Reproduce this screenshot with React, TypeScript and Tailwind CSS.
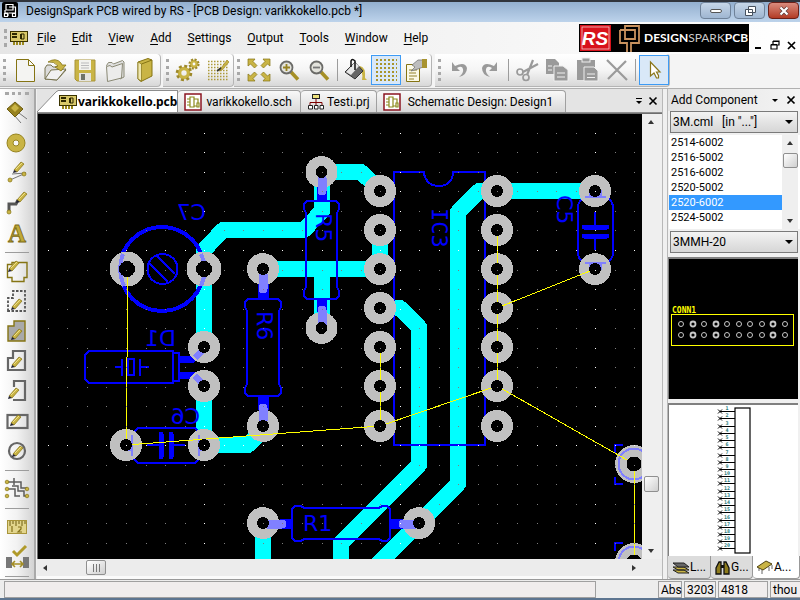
import type { ReactNode } from "react"

const GOLD = "#c9b445"
const DARK = "#857413"
const GREY = "#9a9a9a"

function Icon({ children, size = 26 }: { children: ReactNode; size?: number }) {
    return (
        <svg width={size} height={size} viewBox={`0 0 ${size} ${size}`} fill="none" aria-hidden="true" className="shrink-0">
            {children}
        </svg>
    )
}

function Pencil({ x, y }: { x: number; y: number }) {
    return (
        <g transform={`translate(${x} ${y})`}>
            <path d="M1 9L8 1L11 3L4 11Z" fill={GOLD} stroke="#8d7a1b" strokeWidth="0.8" />
            <path d="M3 8L9 2" stroke="#eee08a" />
            <path d="M0 12L1 9L4 11Z" fill="#223" />
        </g>
    )
}

const icons: Record<string, ReactNode> = {
    new: <path d="M4.500 2.500H16.500L22.500 8.500V24.500H4.500ZM16.500 2.500V8.500H22.500" fill="#f4f4f2" stroke={DARK} />,
    open: (
        <>
            <path d="M3 11L5 8H9L11 10H17L18 13H24L15 23L3 22Z" fill="#dcdcdc" stroke="#77734f" />
            <path d="M3 22L9 13L24 12L15 23Z" fill="#f1f1f1" stroke="#77734f" />
            <path d="M6 5Q14 0 19 6L20 8H24L19 14L13 10L16 9Q12 4 6 5Z" fill={GOLD} stroke={DARK} strokeWidth="0.8" />
        </>
    ),
    save: (
        <>
            <path d="M3 3H23V24H5L3 22Z" fill={GOLD} stroke="#a8943a" />
            <rect x="7" y="3" width="12" height="10" fill="#f3f3ee" />
            <path d="M9 6H17M9 8.500H17M9 11H17" stroke="#bbb" />
            <rect x="7" y="16" width="12" height="8" fill="#e4e4df" />
            <rect x="9" y="17" width="4" height="6" fill="#6f7468" />
        </>
    ),
    folder: (
        <>
            <path d="M4.500 8.500L6.500 5.500H10L11.500 7L20.500 3.500L22 5V20L18 22Z" fill="#e0e0df" stroke="#8a8975" />
            <path d="M4.500 9.500L8 8.500L10 10L20.500 6.500L19.500 21L5.500 24.500Z" fill="#ececeb" stroke="#8a8975" />
        </>
    ),
    book: (
        <>
            <path d="M6 5L16 1.500L20 3V19L9 24.500L6 22Z" fill={GOLD} stroke={DARK} />
            <path d="M6 5L9.500 7V24L6 22Z" fill="#efe7b0" stroke={DARK} strokeWidth="0.7" />
            <path d="M9.500 7L20 3" stroke={DARK} />
        </>
    ),
    gears: (
        <>
            <circle cx="9" cy="16" r="4.500" stroke={GOLD} strokeWidth="3.600" />
            <circle cx="9" cy="16" r="7" stroke="#9d8829" strokeWidth="2.600" strokeDasharray="3 2.500" />
            <circle cx="19" cy="7" r="2.800" stroke={GOLD} strokeWidth="2.800" />
            <circle cx="19" cy="7" r="4.600" stroke="#9d8829" strokeWidth="2" strokeDasharray="2.100 1.510" />
        </>
    ),
    gridEdit: (
        <>
            {[4, 7, 10, 13, 16, 19, 22].map((y) => (
                <path key={y} d={`M3 ${y + 0.5}H23`} stroke="#ad9a3a" strokeWidth="1.500" strokeDasharray="1.500 1.500" />
            ))}
            <path d="M14 14L22 3L24 5L17 13Z" fill={GOLD} stroke="#9d8829" strokeWidth="0.700" />
            <path d="M12 14L16 11" stroke="#333" strokeWidth="1.600" />
        </>
    ),
    fit: (
        <g fill={GOLD} stroke={DARK} strokeWidth="0.700">
            <path d="M2 2H9L7 4.500L11 8.500L8.500 11L4.500 7L2 9Z" />
            <path d="M24 2V9L21.500 7L17.500 11L15 8.500L19 4.500L17 2Z" />
            <path d="M2 24V17L4.500 19L8.500 15L11 17.500L7 21.500L9 24Z" />
            <path d="M24 24H17L19 21.500L15 17.500L17.500 15L21.500 19L24 17Z" />
        </g>
    ),
    zoomIn: (
        <>
            <path d="M15 15L22 22.500" stroke="#a58f26" strokeWidth="3.600" />
            <circle cx="10.500" cy="10.500" r="6" fill="#e3e3dc" stroke="#6b6b68" strokeWidth="1.800" />
            <path d="M7 10.500H14M10.500 7V14" stroke="#968221" strokeWidth="1.800" />
        </>
    ),
    zoomOut: (
        <>
            <path d="M15 15L22 22.500" stroke="#a58f26" strokeWidth="3.600" />
            <circle cx="10.500" cy="10.500" r="6" fill="#e3e3dc" stroke="#6b6b68" strokeWidth="1.800" />
            <path d="M7 10.500H14" stroke="#777" strokeWidth="1.800" />
        </>
    ),
    bucket: (
        <>
            <path d="M17 9Q23 10 22 21L24 23H19Q21 15 15 12Z" fill={GOLD} />
            <path d="M2 15L12 5L20 14L12 22Z" fill="#666" stroke="#333" />
            <path d="M3 15L12 5L16 9L8 18Z" fill="#e7e7e7" />
            <path d="M8 10V4Q9 1 12 4V13" stroke="#111" strokeWidth="1.500" />
        </>
    ),
    grid: (
        <>
            {[3, 7, 11, 15, 19, 23].map((y) => (
                <path key={y} d={`M3 ${y}H24`} stroke="#a9942c" strokeWidth="2" strokeDasharray="2 2" />
            ))}
        </>
    ),
    props: (
        <>
            <path d="M3.500 7.500H16.500V24.500H3.500Z" fill="#fbf9e6" stroke={DARK} />
            <path d="M6 13H14M6 16H13M6 19H14M6 22H11" stroke="#93812a" />
            <path d="M9 8L15 3H20V10L15 12L8 14L12 10Z" fill="#bdbdbd" stroke="#777" strokeWidth="0.800" />
            <rect x="19" y="2" width="5" height="9" fill="#a89330" />
        </>
    ),
    undo: <path d="M5 5V14H13L10 11Q15 8 16 12Q17 16 12 20Q20 18 20 11Q18 4 8 9Z" fill={GREY} />,
    redo: <path d="M20 5V14H12L15 11Q10 8 9 12Q8 16 13 20Q5 18 5 11Q7 4 17 9Z" fill={GREY} />,
    cut: (
        <g stroke={GREY} strokeWidth="1.700">
            <path d="M9 15L24 7M13 18L19 3" strokeWidth="2.200" />
            <circle cx="6" cy="15" r="3" />
            <circle cx="12" cy="20.500" r="3" />
        </g>
    ),
    copy: (
        <g fill={GREY}>
            <path d="M2 2H11L15 6V17H2Z" />
            <path d="M10 9H19L24 13V24H10Z" stroke="#eee" />
            <path d="M4 9H8M4 13H8M13 16H21M13 20H21" stroke="#f0f0f0" />
        </g>
    ),
    paste: (
        <g fill={GREY}>
            <path d="M3 3H21V23H3Z" />
            <rect x="8" y="1" width="8" height="4" stroke="#eee" />
            <path d="M10 10H20L24 14V24H10Z" stroke="#eee" />
            <path d="M13 17H21M13 20.500H21" stroke="#f0f0f0" />
        </g>
    ),
    remove: <path d="M3 3L23 23M22 4L4 22" stroke={GREY} strokeWidth="2.200" />,
    select: <path d="M9.500 5V19L13 16L15.500 21H17.500V18.500L15.500 15H19Z" fill="#fff" stroke="#8a761a" strokeWidth="1.200" />,

    // left toolbar
    component: (
        <>
            <path d="M10 15L17 23M15 13L23 19" stroke="#777" />
            <path d="M3 9L11 2L19 9L11 17Z" fill="#97821f" stroke="#6d5d10" />
            <path d="M7 8L11 4L15 8L11 12Z" fill={GOLD} />
        </>
    ),
    pad: (
        <>
            <circle cx="12" cy="13" r="6" stroke={GOLD} strokeWidth="6" />
            <circle cx="12" cy="13" r="9" stroke="#97841f" />
            <circle cx="12" cy="13" r="3" stroke="#97841f" fill="#f7f7f7" />
        </>
    ),
    wire: (
        <>
            <Pencil x={9} y={1} />
            <path d="M8 14L22 13L6 20" stroke="#777" />
            <circle cx="6" cy="20" r="2" fill={GOLD} stroke={DARK} strokeWidth="0.700" />
            <circle cx="20" cy="14" r="2" fill={GOLD} stroke={DARK} strokeWidth="0.700" />
        </>
    ),
    track: (
        <>
            <path d="M5 21V14H12L14 10" stroke="#555" strokeWidth="3" />
            <Pencil x={12} y={1} />
            <circle cx="5" cy="22" r="2" fill={GOLD} stroke={DARK} strokeWidth="0.700" />
        </>
    ),
    text: (
        <text x="13" y="22" textAnchor="middle" fill="#bfa938" stroke="#7b6914" strokeWidth="0.800" className="font-['Liberation_Serif',serif] text-[25px] font-bold">
            A
        </text>
    ),
    board: (
        <>
            <path d="M3.500 6.500H8V4.500H23V19.500H20V23.500H8V19.500H3.500Z" stroke={DARK} strokeWidth="1.400" />
            <Pencil x={4} y={2} />
        </>
    ),
    keepout: (
        <>
            <path d="M4 23V10H9V3H21V23Z" stroke="#555" strokeWidth="1.800" strokeDasharray="2.500 1.500" />
            <Pencil x={7} y={10} />
        </>
    ),
    copper: (
        <>
            <path d="M4 23V8H10V3H21V23Z" fill="#a9a9a9" stroke={DARK} strokeWidth="1.400" />
            <Pencil x={7} y={10} />
        </>
    ),
    shape: (
        <>
            <path d="M4 22V10H9V3H21V22Z" stroke="#666" strokeWidth="2.200" />
            <Pencil x={7} y={8} />
        </>
    ),
    openShape: (
        <>
            <path d="M10 9V3H21V22H9" stroke="#666" strokeWidth="2.200" />
            <Pencil x={4} y={9} />
        </>
    ),
    rect: (
        <>
            <rect x="3.500" y="7" width="20" height="13" stroke="#666" strokeWidth="2.200" />
            <Pencil x={6} y={6} />
        </>
    ),
    circle: (
        <>
            <circle cx="13" cy="13" r="8" stroke="#666" strokeWidth="2.200" />
            <Pencil x={8} y={7} />
        </>
    ),
    autoroute: (
        <>
            <path d="M4 6H17V12H23M4 13H11V20H16M8 10H14V15H20V20H23M10 2V9" stroke="#5c5c5c" strokeWidth="1.500" />
            {[[3, 6], [3, 13], [3, 20], [23, 13], [23, 20]].map(([cx, cy]) => (
                <circle key={`${cx}-${cy}`} cx={cx} cy={cy} r="1.800" fill={GOLD} stroke={DARK} strokeWidth="0.700" />
            ))}
        </>
    ),
    ruler: (
        <>
            <rect x="3.500" y="6.500" width="19" height="13" fill="#e2d58c" stroke="#a8943a" />
            <path d="M6 7V12M9 7V10M12 7V12M15 7V10M18 7V12M21 7V10" stroke="#6d5d10" />
            <path d="M8 12V18M14 13H17V15L14 18H18" stroke="#83711a" strokeWidth="1.200" />
        </>
    ),
    drc: (
        <>
            <path d="M2 13H8V24H2ZM19 13H25V24H19Z" fill="#777" />
            <path d="M8 20H18M11 17L8 20L11 23M16 17L19 20L16 23" stroke="#a58f26" strokeWidth="1.600" />
            <path d="M9 7L13 11L22 2" stroke="#b09a2a" strokeWidth="3" />
        </>
    ),
}

function PcbIcon() {
    return (
        <Icon size={20}>
            <rect x="1" y="3" width="18" height="11" fill="#3b3300" />
            <rect x="2" y="4" width="16" height="9" fill="#d8c868" />
            <path d="M3 6H8M3 9H8M12 6V11" stroke="#2c2700" strokeWidth="2" />
            <path d="M12 6H15V11H12" stroke="#2c2700" />
            <path d="M5 14V17M8 14V17M11 14V17M14 14V17" stroke="#9a881b" strokeWidth="2" />
        </Icon>
    )
}

function SchIcon() {
    return (
        <Icon size={18}>
            <rect x="1" y="1" width="16" height="16" fill="#fff" stroke="#8b1420" strokeWidth="1.500" />
            <path d="M6 4H10V14H6ZM3 6H6M3 9H6M3 12H6M10 6H14V10M10 13H13M13 10H15V14H13Z" stroke="#8c8a1d" strokeWidth="1.200" />
        </Icon>
    )
}

function PrjIcon() {
    return (
        <Icon size={18}>
            <path d="M9 6V9M3 13V9.500H15V13M9 9V13" stroke="#7d0000" />
            <rect x="5.500" y="1.500" width="7" height="4" fill="#eee27c" stroke="#222" />
            <path d="M1.500 12.500H5.500V16H1.500ZM7.500 12.500H11V16H7.500ZM13 12.500H16.500V16H13Z" fill="#fff" stroke="#222" />
        </Icon>
    )
}

function ToolButton({ name, on, off }: { name: string; on?: boolean; off?: boolean }) {
    return (
        <button
            aria-label={name}
            disabled={off}
            className={`flex size-[30px] shrink-0 items-center justify-center border ${on ? "border-[#3d9bf5] bg-[#d9e8f8]" : "border-transparent"}`}>
            <Icon>{icons[name]}</Icon>
        </button>
    )
}

function Band({ children }: { children: ReactNode }) {
    return (
        <div className="flex h-[33px] shrink-0 items-center rounded-r border-r border-b border-[#b4b4b4] bg-linear-to-b from-white via-[#f5f5f5] to-[#d8d8d8] pl-[3px]">
            <div className="mr-1 h-[22px] border-l-3 border-dotted border-[#a8a8a8]" />
            {children}
        </div>
    )
}

const ToolSep = () => <div className="mx-[3px] h-[22px] border-l border-[#9c9c9c]" />
const SideSep = () => <div className="flex h-2 w-6 shrink-0 items-center"><div className="w-full border-t border-[#9c9c9c]" /></div>

const menus = ["File", "Edit", "View", "Add", "Settings", "Output", "Tools", "Window", "Help"]

function TitleBar() {
    return (
        <header className="flex h-[22px] shrink-0 items-start border-t-2 border-[#30343c] bg-linear-to-b from-[#93afcf] to-[#bdd3eb]">
            <Icon size={20}>
                <rect x="2" y="0" width="16" height="16" rx="2" fill="#000" />
                <path d="M6 2.500H13V8H6ZM9 5H15.500V11H9M5 8V11H8V14M4.500 11.500H7.500V14.500H4.500ZM12.500 11.500H15.500V14.500H12.500Z" stroke="#fff" strokeWidth="1.200" />
            </Icon>
            <h1 className="ml-1.5 grow truncate text-[12px] leading-[18px]">DesignSpark PCB wired by RS - [PCB Design: varikkokello.pcb *]</h1>
            <div className="flex gap-[3px] pr-px">
                <button aria-label="Minimize" className="flex h-[17px] w-[31px] items-center justify-center rounded-sm border border-[#6f8299] bg-linear-to-b from-[#c6d6e8] to-[#9fb6d1]">
                    <span className="h-1 w-3 rounded-xs border border-[#555] bg-white" />
                </button>
                <button aria-label="Restore" className="flex h-[17px] w-[31px] items-center justify-center rounded-sm border border-[#6f8299] bg-linear-to-b from-[#c6d6e8] to-[#9fb6d1]">
                    <Icon size={14}>
                        <path d="M5.500 2.500H12.500V8.500H5.500ZM2.500 5.500H9.500V11.500H2.500Z" fill="#fff" stroke="#48525f" />
                        <path d="M5 8H7V9H5Z" fill="#48525f" />
                    </Icon>
                </button>
                <button aria-label="Close" className="flex h-[17px] w-[31px] items-center justify-center rounded-sm border border-[#6b2018] bg-linear-to-b from-[#d98b7d] to-[#b23a24]">
                    <Icon size={12}>
                        <path d="M2.500 2.500L9.500 9.500M9.500 2.500L2.500 9.500" stroke="#5b3c3c" strokeWidth="3.600" />
                        <path d="M2.500 2.500L9.500 9.500M9.500 2.500L2.500 9.500" stroke="#fff" strokeWidth="2.200" />
                    </Icon>
                </button>
            </div>
        </header>
    )
}

function MenuBar() {
    return (
        <div className="flex h-8 shrink-0 items-center bg-linear-to-r from-[#e6e6e6] to-white pl-1">
            <div className="mr-0.5 h-[18px] border-l-3 border-dotted border-[#a8a8a8]" />
            <PcbIcon />
            <nav className="flex grow">
                {menus.map((m) => (
                    <button key={m} className="px-2 text-[12px] leading-4">
                        <span className="underline underline-offset-2">{m[0]}</span>
                        {m.slice(1)}
                    </button>
                ))}
            </nav>
            <svg width="170" height="28" viewBox="0 0 170 28" fill="none" className="shrink-0">
                <rect width="170" height="28" fill="#000" />
                <rect x="1" y="1" width="31" height="26" fill="#d8121b" />
                <rect x="3" y="3" width="27" height="22" stroke="#f2c9c9" strokeWidth="0.800" />
                <text x="16" y="21" textAnchor="middle" fill="#fff" className="font-['Liberation_Sans',sans-serif] text-[19px] font-bold italic">RS</text>
                <path d="M41 6H56V15H46V2H60V19H52V28M41 6V19H48V28" stroke="#c9925e" strokeWidth="1.800" />
                <text x="65" y="18" className="font-[Lato,sans-serif] text-[12px]">
                    <tspan fill="#fff" className="font-bold">DESIGN</tspan>
                    <tspan fill="#ccc" className="font-normal">SPARK</tspan>
                    <tspan fill="#fff" className="font-bold">PCB</tspan>
                </text>
            </svg>
            <div className="flex items-center gap-1.5 self-end pr-1 pb-1 pl-[5px]">
                <button aria-label="Minimize document"><Icon size={10}><path d="M1 8H7" stroke="#000" strokeWidth="2" /></Icon></button>
                <button aria-label="Restore document"><Icon size={10}><path d="M3 1H9V5H7M1 5H7V9H1ZM3 1V4M1 4.500H7M3 1.500H9" stroke="#000" strokeWidth="1.200" /></Icon></button>
                <button aria-label="Close document"><Icon size={10}><path d="M2 2L9 9M9 2L2 9" stroke="#000" strokeWidth="1.700" /></Icon></button>
            </div>
        </div>
    )
}

function ToolBar() {
    return (
        <div className="flex h-[34px] shrink-0 bg-[#f4f4f4]">
            <Band>
                {["new", "open", "save", "folder", "book"].map((n) => <ToolButton key={n} name={n} />)}
            </Band>
            <div className="w-0.5" />
            <Band>
                {["gears", "gridEdit"].map((n) => <ToolButton key={n} name={n} />)}
            </Band>
            <Band>
                {["fit", "zoomIn", "zoomOut"].map((n) => <ToolButton key={n} name={n} />)}
                <ToolSep />
                <ToolButton name="bucket" />
                <ToolButton name="grid" on />
                <ToolButton name="props" />
            </Band>
            <div className="w-[3px]" />
            <Band>
                {["undo", "redo"].map((n) => <ToolButton key={n} name={n} off />)}
                <ToolSep />
                {["cut", "copy", "paste", "remove"].map((n) => <ToolButton key={n} name={n} off />)}
                <ToolSep />
                <ToolButton name="select" on />
            </Band>
        </div>
    )
}

function SideBar() {
    return (
        <aside className="flex w-[36px] shrink-0 flex-col items-center overflow-hidden border-r-2 border-[#a9a9a9] bg-linear-to-r from-white via-[#f2f2f2] to-[#d3d3d3]">
            <div className="mt-[3px] mb-[3px] w-6 border-t-3 border-dotted border-[#a8a8a8]" />
            {["component", "pad", "wire", "track", "text"].map((n) => <ToolButton key={n} name={n} />)}
            <SideSep />
            {["board", "keepout", "copper", "shape", "openShape", "rect", "circle"].map((n) => <ToolButton key={n} name={n} />)}
            <SideSep />
            <ToolButton name="autoroute" />
            <SideSep />
            <ToolButton name="ruler" />
            <ToolButton name="drc" />
            <SideSep />
        </aside>
    )
}

function Tabs() {
    return (
        <div className="flex h-6 shrink-0 items-end border-b border-[#8e8e8e] bg-[#e4e4e4]">
            <div role="tablist" className="flex h-[22px] grow">
                <div className="flex">
                    <svg width="22" height="22" viewBox="0 0 22 22" className="-mr-px shrink-0">
                        <path d="M0 22L18 3Q20 .5 22 .5V22Z" fill="#fff" />
                        <path d="M0 22L18 3Q20 .5 22 .5" fill="none" stroke="#8e8e8e" />
                    </svg>
                    <button role="tab" aria-selected="true" className="flex items-center border-t border-r border-[#8e8e8e] bg-white font-['Noto_Sans',sans-serif] text-[12px] font-bold">
                        <PcbIcon />
                        varikkokello.pcb
                    </button>
                </div>
                <button role="tab" className="flex items-center gap-1 rounded-t border-t border-r border-[#a0a0a0] bg-linear-to-b from-[#f8f8f8] to-[#d9d9d9] pr-2 pl-1.5 text-[12px]">
                    <SchIcon />
                    varikkokello.sch
                </button>
                <button role="tab" className="flex items-center gap-0.5 rounded-t border-t border-r border-[#a0a0a0] bg-linear-to-b from-[#f8f8f8] to-[#d9d9d9] pr-1.5 pl-1.5 text-[12px]">
                    <PrjIcon />
                    Testi.prj
                </button>
                <button role="tab" className="flex items-center gap-[7px] rounded-t border-t border-r border-[#a0a0a0] bg-linear-to-b from-[#f8f8f8] to-[#d9d9d9] pr-3 pl-1.5 text-[12px]">
                    <SchIcon />
                    Schematic Design: Design1
                </button>
            </div>
            <div className="flex items-center gap-1 self-center pr-1">
                <button aria-label="Tab list"><Icon size={10}><path d="M2 2.500H8" stroke="#000" /><path d="M2 5H8L5 8Z" fill="#000" /></Icon></button>
                <button aria-label="Close tab"><Icon size={10}><path d="M1.500 1.500L8.500 8.500M8.500 1.500L1.500 8.500" stroke="#000" strokeWidth="1.600" /></Icon></button>
            </div>
        </div>
    )
}

type Pad = { x: number; y: number; r?: number; hole?: number }

const pinRows = [191, 230, 269, 308, 347, 386, 426]
const pads: Pad[] = [
    { x: 127, y: 269, r: 17.5, hole: 8 },
    { x: 204, y: 269, r: 17.5, hole: 8 },
    { x: 263, y: 269 },
    { x: 321.5, y: 172 },
    { x: 321.5, y: 328 },
    ...pinRows.map((y) => ({ x: 380, y })),
    ...pinRows.map((y) => ({ x: 497, y })),
    { x: 595, y: 191 },
    { x: 595, y: 269 },
    { x: 204, y: 347 },
    { x: 204, y: 386 },
    { x: 126, y: 445 },
    { x: 204, y: 445 },
    { x: 263, y: 426 },
    { x: 263, y: 523 },
    { x: 419, y: 523 },
    { x: 634, y: 464, r: 19, hole: 7.5 },
    { x: 634, y: 562, r: 19, hole: 7.5 },
]

const dots: { x: number; y: number; bright: boolean }[] = []
for (let i = 2; i < 33; i++) {
    for (let j = 4; j < 27; j++) {
        dots.push({
            x: Math.round(8.7 + i * 19.55),
            y: Math.round(54.8 + j * 19.52),
            bright: i % 10 === 0 || j % 10 === 0,
        })
    }
}

function Board() {
    return (
        <svg className="size-full bg-black" fill="none" role="img" aria-label="PCB layout" shapeRendering="crispEdges">
            <g transform="translate(-38 -114)">
                <g stroke="#00ffff" strokeWidth="16" strokeLinejoin="round">
                    <path d="M322 172H361L381 191" />
                    <path d="M322 172V211L304 230H223L204 250V347" />
                    <path d="M204 386V445H248L263 430" />
                    <path d="M263 269H380V230M322 269V328" />
                    <path d="M380 308H400L419 327V465L341 543V560" />
                    <path d="M595 191H479L458 212V484L376 566" />
                    <path d="M263 523V560" />
                </g>

                <g stroke="#0000ff" strokeWidth="2">
                    <circle cx="162" cy="269" r="42" strokeWidth="4" />
                    <circle cx="162.500" cy="269" r="15" />
                    <path d="M150 264L168 282M157 256L175 274" />
                    {/* crystal */}
                    <path d="M173 351H89L85 355V379L89 383H173ZM174 353H179V381H174" />
                    <path d="M115 367H122M122 359V376M128 359H134V375H128ZM140 359V376M140 367H149" />
                    <path d="M180 359H193L198 354M180 375H193L198 380" strokeWidth="7" />
                    {/* C6 */}
                    <path d="M134 434V432L138 428H195L199 432V459L195 463H138L134 459V456" />
                    <path d="M161 434V457M171 434V457" strokeWidth="5" strokeLinecap="round" />
                    <path d="M147 445H159M172 445H185" />
                    {/* C5 */}
                    <path d="M585 198Q578 200 578 208V253Q578 260 585 262M606 198Q613 200 613 208V253Q613 260 606 262" />
                    <path d="M584 227H607M584 236H607" strokeWidth="5" strokeLinecap="round" />
                    <path d="M595 212V225M595 238V250" />
                    {/* R6, R5, R1 */}
                    <path d="M248 299H278L281 302V307L279 311V384L281 388V393L278 396H248L245 393V388L247 384V311L245 307V302Z" />
                    <path d="M263 280V299M263 396V410" strokeWidth="11" />
                    <path d="M307 201H336L339 204V209L337 213V287L339 291V296L336 299H307L304 296V291L306 287V213L304 209V204Z" />
                    <path d="M322 185V201M322 299V312" strokeWidth="10" />
                    <path d="M292 509L295 506H301L304 508H379L382 506H387L390 509V538L387 541H382L379 539H304L301 541H295L292 538Z" />
                    <path d="M280 524H292M390 524H404" strokeWidth="10" />
                    {/* IC3 */}
                    <path d="M424 172H394V445H485V172H453M424 171V174Q427 186 439 186Q451 186 453 174V171" />
                    <path d="M615 453V445H623M615 477V484H623M615 551V543H623" />
                </g>

                <g fill="#0000ff" className="font-['DejaVu_Sans',sans-serif] text-[22px]">
                    <text x="303" y="531">R1</text>
                    <text transform="translate(206 220) scale(-1 1)">C7</text>
                    <text transform="translate(176 346) scale(-1 1)">D1</text>
                    <text transform="translate(200 424) scale(-1 1)">C6</text>
                    <text transform="translate(257 311) rotate(90)">R6</text>
                    <text transform="translate(316 213) rotate(90)">R5</text>
                    <text transform="translate(432 208) rotate(90)" className="font-['DejaVu_Sans_Mono',monospace]">IC3</text>
                    <text transform="translate(557 195) rotate(90)">C5</text>
                </g>

                {pads.map((p) => (
                    <circle key={`${p.x}-${p.y}`} cx={p.x} cy={p.y} r={p.r ?? 16} fill="#c0c0c0" />
                ))}

                {/* silk over pads */}
                <g stroke="#8080ff" strokeWidth="2">
                    <path d="M123 254Q117 269 124 286M201 254L204 262M204 277L201 286" strokeWidth="4" />
                    <path d="M263 274V289M263 408V421M322 178V191M322 310V325" strokeWidth="9" strokeLinecap="round" />
                    <path d="M267 524H282M403 524H416" strokeWidth="9" strokeLinecap="round" />
                    <path d="M195 358L202 351M195 376L202 383" strokeWidth="6" />
                    <path d="M132 435V456M199 435V456M585 197H606M585 263H606" />
                    <path d="M126 446H132M199 446H205" strokeWidth="10" />
                    <path d="M595 190V197M595 263V270" strokeWidth="13" />
                    <circle cx="634" cy="464" r="15.500" />
                    <circle cx="634" cy="562" r="15.500" />
                </g>

                <g stroke="#ffff00">
                    <path d="M127.500 269V357M126.500 357V445M126 445L380 426L497 386L634 464M497 308L595 269" />
                    <path d="M380.500 347V426M497.500 230V386" />
                    <path d="M634.500 464V562" strokeWidth="1.500" />
                </g>

                {pads.map((p) => (
                    <circle key={`${p.x}-${p.y}`} cx={p.x} cy={p.y} r={p.hole ?? 6} fill="#000" />
                ))}

                {dots.map((d) => (
                    <rect key={`${d.x}-${d.y}`} x={d.x} y={d.y} width="1" height="1" fill={d.bright ? "#fff" : "#7d7d7d"} />
                ))}
            </g>
        </svg>
    )
}

function Arrow({ d }: { d: string }) {
    return <Icon size={8}><path d={d} fill="#333" /></Icon>
}

const thumb = "border border-[#8f8f8f] rounded-xs bg-linear-to-br from-white to-[#cfcfcf]"

function Editor() {
    return (
        <main className="ml-px flex min-w-0 grow flex-col border-r border-[#b8b8b8]">
            <Tabs />
            <div className="flex min-h-0 grow border-t border-l border-[#6e6e6e] pr-0.5">
                <div className="min-w-0 grow overflow-hidden">
                    <Board />
                </div>
                <div className="flex w-[18px] shrink-0 flex-col items-center bg-[#efefef]">
                    <button aria-label="Scroll up" className="p-1"><Arrow d="M1 6H7L4 2Z" /></button>
                    <div className="grow-[350]" />
                    <div className={`h-4 w-[15px] ${thumb}`} />
                    <div className="grow-[52]" />
                    <button aria-label="Scroll down" className="p-1"><Arrow d="M1 2H7L4 6Z" /></button>
                </div>
            </div>
            <div className="flex h-5 shrink-0 items-center border-b-3 border-[#fafafa] bg-[#ececec] pr-5">
                <button aria-label="Scroll left" className="p-1"><Arrow d="M6 1V7L2 4Z" /></button>
                <div className="grow-[33]" />
                <div className={`flex h-[15px] w-5 items-center justify-center gap-0.5 ${thumb}`}>
                    <span className="h-2 w-px bg-[#777]" />
                    <span className="h-2 w-px bg-[#777]" />
                    <span className="h-2 w-px bg-[#777]" />
                </div>
                <div className="grow-[518]" />
                <button aria-label="Scroll right" className="p-1"><Arrow d="M2 1V7L6 4Z" /></button>
            </div>
        </main>
    )
}

function Combo({ label, value }: { label: string; value: string }) {
    return (
        <div className="relative mx-0.5 shrink-0 border border-[#7a7a7a] bg-linear-to-b from-[#f3f3f3] to-[#d6d6d6]">
            <select aria-label={label} className="block h-5 w-full appearance-none pl-0.5 text-[12px] leading-5">
                <option>{value}</option>
            </select>
            <span className="pointer-events-none absolute top-2 right-1 border-x-4 border-t-4 border-x-transparent border-t-black" />
        </div>
    )
}

const parts = ["2514-6002", "2516-5002", "2516-6002", "2520-5002", "2520-6002", "2524-5002"]
const holes = Array.from({ length: 10 }, (_, i) => Math.round(12 + i * 11.55))
const pins = Array.from({ length: 20 }, (_, i) => i + 1)

function ComponentPanel() {
    return (
        <aside className="ml-1 flex w-[133px] shrink-0 flex-col border-l border-[#b8b8b8] bg-[#f0f0f0]">
            <div className="flex h-[22px] shrink-0 items-center bg-linear-to-r from-[#e2e2e2] to-[#f4f4f4] pr-1 pl-[3px]">
                <h2 className="grow text-[12px]">Add Component</h2>
                <button aria-label="Panel menu" className="mr-2 border-x-3 border-t-3 border-x-transparent border-t-black" />
                <button aria-label="Close panel"><Icon size={10}><path d="M1.500 1.500L8.500 8.500M8.500 1.500L1.500 8.500" stroke="#000" strokeWidth="1.700" /></Icon></button>
            </div>
            <Combo label="Library" value={'3M.cml\u00a0\u00a0\u00a0[in "..."]'} />
            <div className="my-0.5 ml-px flex h-[94px] shrink-0 bg-white">
                <ul role="listbox" aria-label="Components" className="grow">
                    {parts.map((p) => (
                        <li key={p} role="option" aria-selected={p === "2520-6002"} className={`h-[15px] pl-0.5 text-[11px] leading-[15px] ${p === "2520-6002" ? "bg-[#3399ff] text-white" : ""}`}>
                            {p}
                        </li>
                    ))}
                </ul>
                <div className="mr-0.5 flex w-4 flex-col items-center bg-[#efefef]">
                    <button aria-label="Scroll list up" className="p-1"><Arrow d="M1 6H7L4 2Z" /></button>
                    <div className={`mt-0.5 h-[15px] w-[15px] ${thumb}`} />
                    <div className="grow" />
                    <button aria-label="Scroll list down" className="p-1"><Arrow d="M1 2H7L4 6Z" /></button>
                </div>
            </div>
            <Combo label="Package" value="3MMH-20" />
            <div className="mt-1 mr-0.5 h-[142px] shrink-0 border-t-2 border-l border-[#808080] bg-black">
                <svg className="size-full" fill="none" role="img" aria-label="Footprint preview">
                    <text x="3" y="54" fill="#ffff00" className="font-['DejaVu_Sans_Mono',monospace] text-[8px] font-bold">CONN1</text>
                    <rect x="2.500" y="55.500" width="122" height="31" stroke="#ffff00" />
                    {holes.map((x, i) => (
                        <g key={x} stroke="#c8c8c8" strokeWidth={i === 1 || i === 3 || i === 8 ? 1.8 : 1}>
                            <circle cx={x} cy="65" r="2.500" />
                            <circle cx={x} cy="76" r="2.500" />
                        </g>
                    ))}
                </svg>
            </div>
            <div className="mt-1 mr-0.5 min-h-0 grow border-t-2 border-l border-[#808080] bg-white">
                <svg className="size-full" fill="none" role="img" aria-label="Symbol preview">
                    <rect x="66" y="3" width="15" height="145" stroke="#000" strokeWidth="1.200" />
                    {pins.map((n) => (
                        <g key={n} transform={`translate(51 ${Math.round(n * 7.22 - 1)})`}>
                            <path d="M0 .5H15M-2 -1.500L2 2.500M2 -1.500L-2 2.500" stroke="#000" />
                            <text x="7" y="-1" textAnchor="middle" fill="#2f7f7f" className="font-['DejaVu_Sans_Mono',monospace] text-[5px] font-bold">{n}</text>
                        </g>
                    ))}
                </svg>
            </div>
            <div role="tablist" className="flex h-[23px] shrink-0 text-[12px]">
                <button role="tab" className="flex w-[43px] items-center rounded-b border-r border-b border-[#999] bg-[#dcdcdc] pl-1">
                    <Icon size={18}>
                        <path d="M1 12L6 15H17L12 12ZM1 9L6 12H17L12 9Z" fill={GOLD} stroke="#222" />
                        <path d="M1 5L6 9H17L12 5Z" fill="#666" stroke="#222" />
                    </Icon>
                    L...
                </button>
                <button role="tab" className="flex w-[42px] items-center rounded-b border-r border-b border-[#999] bg-[#dcdcdc] pl-[3px]">
                    <Icon size={17}>
                        <path d="M2 15V9L5 3H7V15ZM10 15V3H12L15 9V15Z" fill="#8d7b1c" stroke="#111" strokeWidth="1.300" />
                        <path d="M7 6H10V9H7Z" fill="#111" />
                    </Icon>
                    G...
                </button>
                <button role="tab" aria-selected="true" className="flex grow items-center rounded-b border-r border-b border-[#999] bg-white pl-[3px]">
                    <Icon size={18}>
                        <path d="M3 10V13M6 12V16M13 9V13M16 7V11" stroke="#666" />
                        <path d="M1 9L10 3L16 6L7 12Z" fill={GOLD} stroke="#4f4310" />
                    </Icon>
                    A...
                </button>
            </div>
        </aside>
    )
}

function StatusBar() {
    const cell = "h-[17px] border border-[#a0a0a0] bg-[#f0eded] pl-0.5 leading-[17px]"
    return (
        <footer className="flex h-[21px] shrink-0 items-center gap-0.5 border-t border-b-2 border-t-[#999] border-b-[#5d7590] bg-[#ededed] pl-1 text-[12px]">
            <div className={`${cell} grow`} />
            <div className="w-[58px]" />
            <div className={`${cell} w-6`}>Abs</div>
            <div className={`${cell} w-8`}>3203</div>
            <div className={`${cell} w-[50px]`}>4818</div>
            <div className={`${cell} w-[30px] border-r-0`}>thou</div>
        </footer>
    )
}

export default function App() {
    return (
        <div className="flex h-screen flex-col overflow-hidden bg-[#f0f0f0] font-[Roboto,sans-serif] text-black">
            <TitleBar />
            <MenuBar />
            <ToolBar />
            <div className="flex min-h-0 grow border-t border-[#b0b0b0]">
                <SideBar />
                <Editor />
                <ComponentPanel />
            </div>
            <StatusBar />
        </div>
    )
}
